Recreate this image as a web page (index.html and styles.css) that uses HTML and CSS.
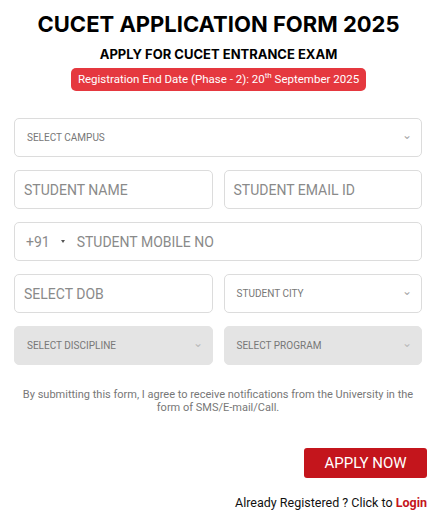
FILE: index.html
```html
<!DOCTYPE html>
<html lang="en">
<head>
  <meta charset="UTF-8">
  <meta name="viewport" content="width=device-width, initial-scale=1.0">
  <title>CUCET Application Form 2025</title>
  <link rel="stylesheet" href="styles.css">
</head>
<body>
  <div class="page">
    <h1 class="title">CUCET APPLICATION FORM 2025</h1>
    <h2 class="subtitle">APPLY FOR CUCET ENTRANCE EXAM</h2>
    <div class="badge-row">
      <span class="badge">Registration End Date (Phase - 2): 20<sup>th</sup> September 2025</span>
    </div>

    <form class="form">
      <div class="field select small">
        <span>SELECT CAMPUS</span>
        <span class="chev">&#8964;</span>
      </div>

      <div class="row">
        <div class="field"><span>STUDENT NAME</span></div>
        <div class="field"><span>STUDENT EMAIL ID</span></div>
      </div>

      <div class="field phone">
        <span class="code">+91</span>
        <span class="caret"></span>
        <span>STUDENT MOBILE NO</span>
      </div>

      <div class="row">
        <div class="field"><span>SELECT DOB</span></div>
        <div class="field select small"><span>STUDENT CITY</span><span class="chev">&#8964;</span></div>
      </div>

      <div class="row">
        <div class="field select small disabled"><span>SELECT DISCIPLINE</span><span class="chev">&#8964;</span></div>
        <div class="field select small disabled"><span>SELECT PROGRAM</span><span class="chev">&#8964;</span></div>
      </div>

      <p class="consent">By submitting this form, I agree to receive notifications from the University in the form of SMS/E-mail/Call.</p>
    </form>

    <div class="actions">
      <a href="#" class="apply">APPLY NOW</a>
      <p class="login">Already Registered ? Click to <a href="#">Login</a></p>
    </div>
  </div>
</body>
</html>
```

FILE: styles.css
```css
body {
  margin: 0;
  font-family: Roboto, "Liberation Sans", sans-serif;
  background-color: #fff;
  color: #000;
}
.page {
  padding: 10px 10px 0 14px;
}
.title {
  margin: 0 0 0 -4px;
  text-align: center;
  font-family: Inter, "Liberation Sans", sans-serif;
  font-size: 22px;
  font-weight: 700;
  line-height: 28px;
}
.subtitle {
  margin: 8px 0 0 -4px;
  text-align: center;
  font-family: Inter, "Liberation Sans", sans-serif;
  font-size: 13px;
  font-weight: 700;
  line-height: 16px;
}
.badge-row {
  text-align: center;
  margin: 6px 0 0 -4px;
}
.badge {
  display: inline-block;
  background-color: #e5383f;
  color: #fff;
  font-size: 11.5px;
  line-height: 23px;
  padding: 0 7px;
  border-radius: 5px;
}
.badge sup {
  font-size: 8px;
  line-height: 0;
}
.form {
  width: 408px;
  margin-top: 27px;
  display: flex;
  flex-direction: column;
  gap: 13px;
}
.row {
  display: grid;
  grid-template-columns: minmax(0, 1fr) minmax(0, 1fr);
  gap: 11px;
}
.field {
  box-sizing: border-box;
  height: 39px;
  border: 1px solid #dcdcdc;
  border-radius: 5px;
  display: flex;
  align-items: center;
  padding: 0 9px;
  font-size: 14px;
  color: #8a8a8a;
}
.field.small {
  font-size: 10px;
  padding-left: 12px;
  color: #777;
}
.select {
  justify-content: space-between;
}
.chev {
  font-size: 12px;
  color: #aaa;
  margin-top: -6px;
}
.disabled {
  background-color: #e4e4e4;
  border-color: #e4e4e4;
  color: #888;
}
.disabled .chev {
  color: #bbb;
}
.phone .code {
  color: #8a8a8a;
  margin-left: 2px;
}
.phone .caret {
  width: 0;
  height: 0;
  border-left: 2.5px solid transparent;
  border-right: 2.5px solid transparent;
  border-top: 3px solid #555;
  margin: 0 12px 0 11px;
}
.consent {
  margin: 10px 0 0 0;
  text-align: center;
  font-size: 11px;
  line-height: 13px;
  color: #777;
  padding: 0 6px;
}
.actions {
  text-align: right;
  margin-top: 34px;
}
.apply {
  display: inline-block;
  background-color: #c4151c;
  color: #fff;
  text-decoration: none;
  font-size: 15px;
  line-height: 30px;
  width: 123px;
  text-align: center;
  border-radius: 3px;
}
.login {
  margin: 17px 0 0 0;
  font-size: 12.5px;
  color: #111;
}
.login a {
  color: #c4151c;
  font-weight: 700;
  text-decoration: none;
}
```
